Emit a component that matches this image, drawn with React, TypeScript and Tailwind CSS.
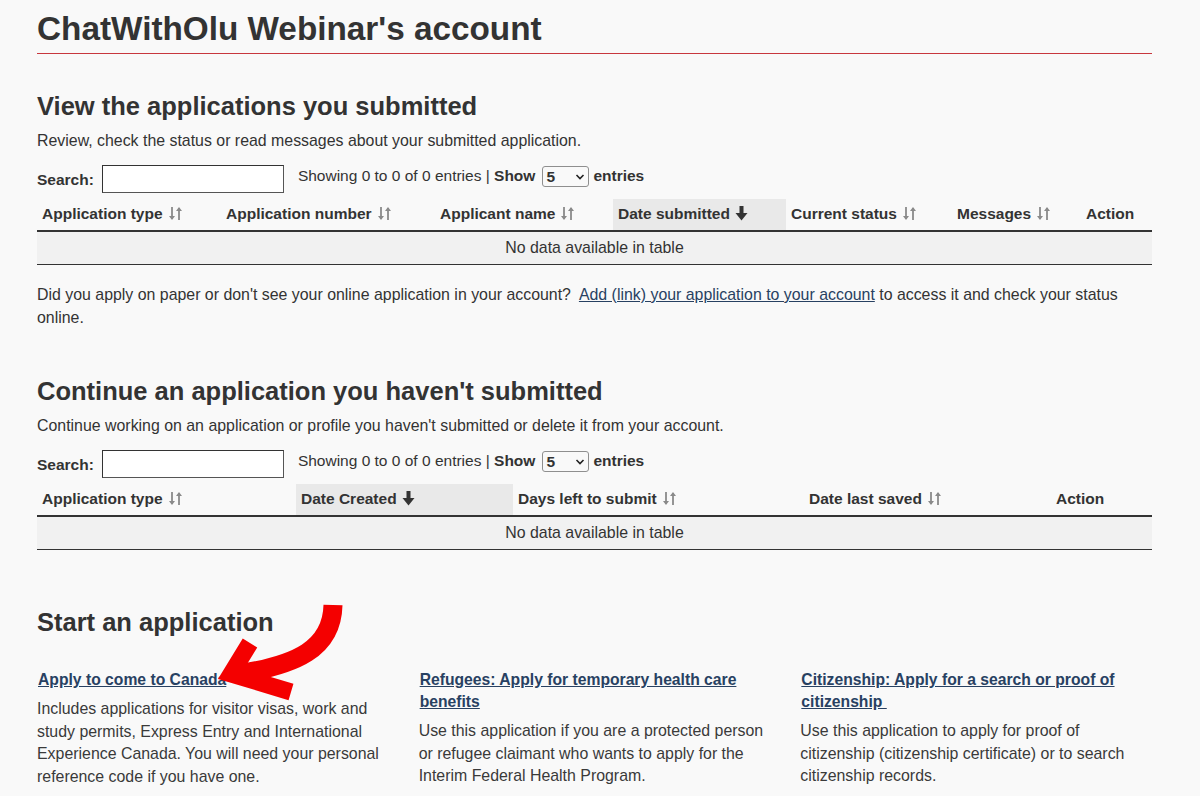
import React from 'react';

const linkCls = 'text-[#284162] underline';

function SortBoth() {
  return (
    <svg width="15" height="15" viewBox="0 0 15 15" className="inline-block ml-[5px] -mt-[3px] align-middle">
      <g stroke="#8a8a8a" strokeWidth="1.8" fill="none">
        <line x1="4" y1="1" x2="4" y2="13" />
        <line x1="11" y1="2" x2="11" y2="14" />
      </g>
      <path d="M1 10 L4 14 L7 10 Z" fill="#8a8a8a" />
      <path d="M8 5 L11 1 L14 5 Z" fill="#8a8a8a" />
    </svg>
  );
}

function SortDown() {
  return (
    <svg width="13" height="15" viewBox="0 0 13 15" className="inline-block ml-[5px] -mt-[3px] align-middle">
      <rect x="4.5" y="0" width="4" height="8" fill="#333" />
      <path d="M0.5 7 L12.5 7 L6.5 14.5 Z" fill="#333" />
    </svg>
  );
}

function SearchRow() {
  return (
    <div className="flex items-start h-[28px]">
      <span className="font-bold leading-[28px] mr-[8px] mt-[1px]">Search:</span>
      <input className="w-[182px] h-[28px] bg-white border border-[#555] border-t-[#333] border-l-[#333]" />
      <span className="ml-[14px] leading-[22px]">
        Showing 0 to 0 of 0 entries | <b>Show</b>
      </span>
      <div className="ml-[7px] mt-[1px] w-[47px] h-[21px] border border-[#8f8f8f] rounded-[3px] bg-[#f9f9f9] flex items-center justify-between px-[3px]">
        <span className="font-bold leading-none">5</span>
        <svg width="10" height="8" viewBox="0 0 10 8">
          <path d="M1.5 2 L5 5.5 L8.5 2" stroke="#222" strokeWidth="1.6" fill="none" />
        </svg>
      </div>
      <span className="ml-[4px] font-bold leading-[22px]">entries</span>
    </div>
  );
}

type Col = { label: string; sort: 'both' | 'down' | 'none' };

function DataTable({ cols, template }: { cols: Col[]; template: string }) {
  return (
    <div className="mt-[6px]">
      <div className={`grid ${template} border-b-2 border-[#333] h-[33px]`}>
        {cols.map(c => (
          <div
            key={c.label}
            className={`px-[5px] font-bold leading-[29px] whitespace-nowrap ${c.sort === 'down' ? 'bg-[#e9e9e9]' : ''}`}
          >
            {c.label}
            {c.sort === 'both' && <SortBoth />}
            {c.sort === 'down' && <SortDown />}
          </div>
        ))}
      </div>
      <div className="bg-[#f1f1f1] border-b border-[#333] h-[33px] leading-[31px] text-center text-[15.9px]">
        No data available in table
      </div>
    </div>
  );
}

const submittedCols: Col[] = [
  { label: 'Application type', sort: 'both' },
  { label: 'Application number', sort: 'both' },
  { label: 'Applicant name', sort: 'both' },
  { label: 'Date submitted', sort: 'down' },
  { label: 'Current status', sort: 'both' },
  { label: 'Messages', sort: 'both' },
  { label: 'Action', sort: 'none' },
];

const draftCols: Col[] = [
  { label: 'Application type', sort: 'both' },
  { label: 'Date Created', sort: 'down' },
  { label: 'Days left to submit', sort: 'both' },
  { label: 'Date last saved', sort: 'both' },
  { label: 'Action', sort: 'none' },
];

const starts = [
  {
    title: 'Apply to come to Canada',
    body: 'Includes applications for visitor visas, work and study permits, Express Entry and International Experience Canada. You will need your personal reference code if you have one.',
  },
  {
    title: 'Refugees: Apply for temporary health care benefits',
    body: 'Use this application if you are a protected person or refugee claimant who wants to apply for the Interim Federal Health Program.',
  },
  {
    title: 'Citizenship: Apply for a search or proof of citizenship\u00a0',
    body: 'Use this application to apply for proof of citizenship (citizenship certificate) or to search citizenship records.',
  },
];

export default function App() {
  return (
    <div className="relative min-h-[796px] bg-[#f9f9f9] text-[#333] text-[15.5px] font-['Liberation_Sans',Arial,sans-serif] overflow-hidden">
      <div className="ml-[37px] w-[1115px] pt-[9px]">
        <h1 className="text-[33.3px] font-bold leading-[40px] pb-[4px]">ChatWithOlu Webinar's account</h1>
        <div className="h-px bg-[#c8373e]" />

        <h2 className="mt-[36px] text-[25.5px] font-bold leading-[32px]">View the applications you submitted</h2>
        <p className="mt-[8px] leading-[22px] text-[15.9px]">
          Review, check the status or read messages about your submitted application.
        </p>
        <div className="mt-[13px]">
          <SearchRow />
        </div>
        <DataTable cols={submittedCols} template="grid-cols-[184px_214px_178px_173px_166px_129px_1fr]" />

        <p className="mt-[18px] leading-[23px] pr-[20px] text-[15.9px]">
          Did you apply on paper or don't see your online application in your account?{'\u00a0 '}
          <a className={linkCls}>Add (link) your application to your account</a> to access it and check your status
          online.
        </p>

        <h2 className="mt-[46px] text-[25.5px] font-bold leading-[32px]">Continue an application you haven't submitted</h2>
        <p className="mt-[8px] leading-[22px] text-[15.9px]">
          Continue working on an application or profile you haven't submitted or delete it from your account.
        </p>
        <div className="mt-[13px]">
          <SearchRow />
        </div>
        <DataTable cols={draftCols} template="grid-cols-[259px_217px_291px_247px_1fr]" />

        <h2 className="mt-[56px] text-[25.5px] font-bold leading-[32px]">Start an application</h2>
        <div className="mt-[31px] grid grid-cols-3 gap-[30px]">
          {starts.map(s => (
            <div key={s.title}>
              <a className={`${linkCls} text-[15.7px] font-bold leading-[22px] block pl-[1px]`}>{s.title}</a>
              <p className="mt-[7px] leading-[22.5px] text-[15.9px] text-[#3a3a3a]">{s.body}</p>
            </div>
          ))}
        </div>
      </div>

      <svg className="absolute left-0 top-0 pointer-events-none" width="1200" height="796">
        <path d="M333 605 C332 649 296 665 238 674" stroke="#f40000" strokeWidth="19" fill="none" />
        <path d="M250 643 L231 674 L291 692" stroke="#f40000" strokeWidth="17" fill="none" strokeLinejoin="miter" />
      </svg>
    </div>
  );
}
